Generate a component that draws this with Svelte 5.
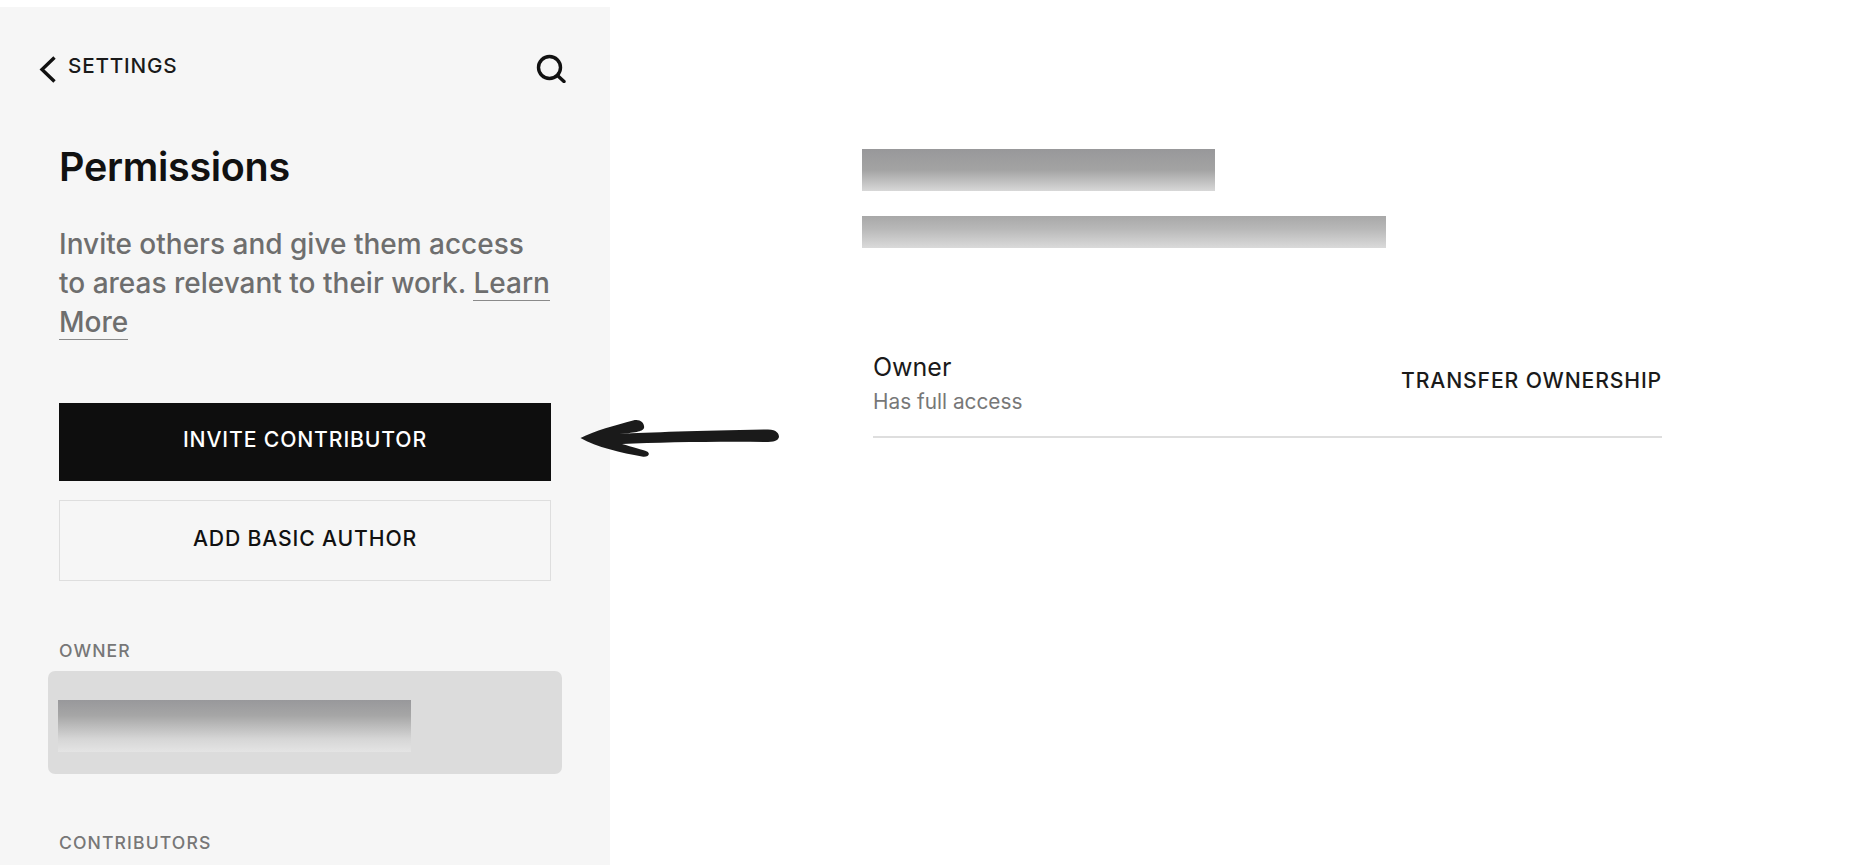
<script>
	const sections = { owner: 'OWNER', contributors: 'CONTRIBUTORS' };
</script>

<div class="page">
	<aside class="panel">
		<header class="top">
			<a class="back" href="#settings">
				<svg class="chevron" viewBox="0 0 18 27" aria-hidden="true">
					<path d="M15.5 1.5 L3 13.5 L15.5 25.5" />
				</svg>
				<span>SETTINGS</span>
			</a>
			<svg class="search" viewBox="0 0 30 29" aria-hidden="true">
				<circle cx="13.5" cy="13.5" r="11" />
				<path d="M21.5 21.5 L28 27.5" />
			</svg>
		</header>

		<div class="body">
			<h1>Permissions</h1>
			<p class="intro">
				Invite others and give them access to areas relevant to their work.
				<a href="#learn">Learn More</a>
			</p>

			<button class="btn primary">INVITE CONTRIBUTOR</button>
			<button class="btn outline">ADD BASIC AUTHOR</button>

			<h2 class="label first">{sections.owner}</h2>
			<div class="owner-card">
				<div class="redact owner-redact"></div>
			</div>

			<h2 class="label second">{sections.contributors}</h2>
		</div>
	</aside>

	<main class="content">
		<div class="redact title-redact"></div>
		<div class="redact sub-redact"></div>

		<div class="row">
			<div class="who">
				<div class="role">Owner</div>
				<div class="desc">Has full access</div>
			</div>
			<a class="transfer" href="#transfer">TRANSFER OWNERSHIP</a>
		</div>
	</main>

	<!-- hand drawn annotation over both panes -->
	<svg class="arrow" viewBox="0 0 200 40" aria-hidden="true">
		<path
			d="M0.5 19 C14 12 36 6 53 1.5 C60 -0.5 65 4 64 9 C63 12 58 13.5 39 15
			C70 13.5 120 11.5 188 10.5 C197 10.5 199 15 199 18 C198 22 194 23 185 23
			C130 22.5 80 23.5 42 25 C52 28 63 31 67 32.5 C71 35 68 38.5 62 37.5
			C42 34 16 28 0.5 19 Z"
		/>
	</svg>
</div>

<style>
	:global(body) {
		margin: 0;
		background: #fff;
	}
	.page {
		position: relative;
		display: flex;
		height: 858px;
		padding-top: 7px;
		overflow: hidden;
		font-family: Inter, 'Liberation Sans', sans-serif;
		color: #111;
	}
	.panel {
		flex: 0 0 610px;
		background: #f6f6f6;
	}
	.top {
		display: flex;
		justify-content: space-between;
		padding: 48px 44px 0 39px;
		height: 42px;
	}
	.back {
		display: flex;
		gap: 11px;
		color: #1a1a1a;
		text-decoration: none;
		font-size: 20.7px;
		font-weight: 500;
		letter-spacing: 0.8px;
		line-height: 34px;
		height: 34px;
		margin-top: -6px;
	}
	.chevron {
		width: 18px;
		height: 27px;
		margin-top: 7px;
		fill: none;
		stroke: #111;
		stroke-width: 3.4;
	}
	.search {
		width: 30px;
		height: 29px;
		margin-top: -1px;
		fill: none;
		stroke: #111;
		stroke-width: 3.4;
		stroke-linecap: round;
	}
	.body {
		padding: 0 59px;
	}
	h1 {
		margin: 46px 0 0;
		font-size: 39.5px;
		line-height: 48px;
		font-weight: 600;
		letter-spacing: -0.3px;
		color: #111;
	}
	.intro {
		margin: 34px 0 0;
		font-size: 28px;
		font-weight: 450;
		line-height: 39px;
		color: #6e6e6e;
	}
	.intro a {
		color: inherit;
		text-decoration: none;
		border-bottom: 1px solid #8a8a8a;
	}
	.btn {
		display: block;
		width: 100%;
		font: inherit;
		font-size: 21.2px;
		font-weight: 500;
		letter-spacing: 0.85px;
		padding: 0 0 6px;
		border-radius: 0;
	}
	.primary {
		height: 78px;
		margin-top: 61px;
		background: #0e0e0e;
		color: #fff;
		border: 0;
	}
	.outline {
		height: 81px;
		margin-top: 19px;
		background: transparent;
		color: #111;
		border: 1px solid #dedede;
	}
	.label {
		margin: 0;
		font-size: 17.6px;
		line-height: 20px;
		font-weight: 500;
		letter-spacing: 1.1px;
		color: #777;
	}
	.first {
		margin-top: 60px;
	}
	.second {
		margin-top: 59px;
	}
	.owner-card {
		margin: 10px -11px 0;
		height: 103px;
		padding-top: 29px;
		box-sizing: border-box;
		background: #dcdcdc;
		border-radius: 7px;
	}
	.redact {
		background: linear-gradient(#98989b, #a6a6a6 30%, #d6d6d6 75%, #e4e4e4);
	}
	.owner-redact {
		width: 353px;
		height: 52px;
		margin-left: 10px;
	}
	.content {
		flex: 1;
		padding: 142px 0 0 252px;
	}
	.title-redact {
		width: 353px;
		height: 42px;
		background: linear-gradient(#98989a, #a3a3a3 50%, #d8d8d8);
	}
	.sub-redact {
		width: 524px;
		height: 32px;
		margin-top: 25px;
		background: linear-gradient(#a8a8a8, #b8b8b8 40%, #dadada);
	}
	.row {
		display: flex;
		justify-content: space-between;
		align-items: center;
		width: 789px;
		height: 99px;
		margin: 89px 0 0 11px;
		border-bottom: 2px solid #dedede;
	}
	.who {
		padding-bottom: 3px;
	}
	.role {
		font-size: 25px;
		line-height: 33px;
		color: #1a1a1a;
	}
	.desc {
		font-size: 20.8px;
		line-height: 35px;
		color: #777;
	}
	.transfer {
		padding-bottom: 14px;
		font-size: 21.2px;
		font-weight: 500;
		letter-spacing: 0.85px;
		color: #1a1a1a;
		text-decoration: none;
	}
	.arrow {
		position: absolute;
		left: 580px;
		top: 419px;
		width: 200px;
		height: 40px;
		fill: #1a1a1a;
	}
</style>
